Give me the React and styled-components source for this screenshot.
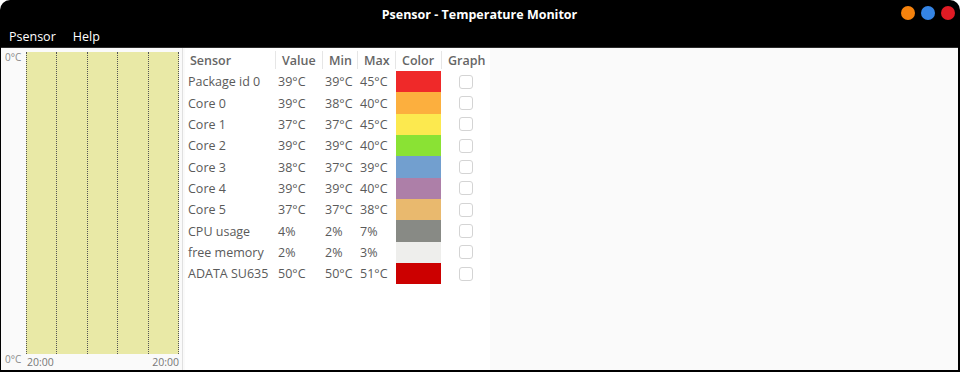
import React from 'react'
import styled, { createGlobalStyle } from 'styled-components'

const Global = createGlobalStyle`
  html, body { margin: 0; padding: 0; background: #fff; }
  body { font-family: "Open Sans", "DejaVu Sans", sans-serif; }
`

const Window = styled.div`
  width: 960px;
  height: 372px;
  box-sizing: border-box;
  background: #000;
  border-radius: 10px 10px 0 0;
  padding: 0 2px 2px 1px;
  display: flex;
  flex-direction: column;
  overflow: hidden;
`

const TitleBar = styled.div`
  height: 24px;
  position: relative;
  display: flex;
  align-items: center;
  justify-content: center;
  color: #fff;
  font-weight: 700;
  font-size: 12.5px;
  padding-top: 2px;
`

const Controls = styled.div`
  position: absolute;
  right: 3px;
  top: 6px;
  display: flex;
  gap: 6px;
`

const Dot = styled.span`
  width: 14px;
  height: 14px;
  border-radius: 50%;
  background: ${p => p.color};
`

const MenuBar = styled.div`
  height: 21px;
  display: flex;
  align-items: center;
  gap: 17px;
  padding-left: 8px;
  color: #fff;
  font-size: 12.5px;
`

const Body = styled.div`
  flex: 1;
  display: flex;
  background: #fafafa;
  border-top: 1px solid #2a2a2a;
`

const GraphPanel = styled.div`
  width: 181px;
  border-right: 1px solid #e0e0e0;
  display: flex;
  flex-direction: column;
  padding: 4px 0 0 0;
  font-size: 10px;
  color: #8a8a8a;
`

const GraphRow = styled.div`
  flex: 1;
  display: flex;
`

const Axis = styled.div`
  width: 25px;
  display: flex;
  flex-direction: column;
  justify-content: space-between;
  padding-left: 4px;
  box-sizing: border-box;
  line-height: 10px;
  margin-bottom: -10px;
`

const Plot = styled.div`
  width: 152px;
  display: flex;
  background: #e9e9a6;
  border-left: 1px dotted #555;
`

const PlotCol = styled.div`
  flex: 1;
  border-right: 1px dotted #555;
`

const TimeRow = styled.div`
  height: 16px;
  display: flex;
  justify-content: space-between;
  padding: 0 3px 0 26px;
  font-size: 10.5px;
  color: #777;
  line-height: 16px;
`

const Table = styled.div`
  margin-left: 2px;
  width: 305px;
  background: #fff;
  display: grid;
  grid-template-columns: 90px 47px 35px 38px 46px 49px;
  grid-template-rows: 23px;
  grid-auto-rows: 21.35px;
  align-content: start;
  font-size: 12.5px;
  color: #5a5a5a;
`

const Head = styled.div`
  display: flex;
  align-items: center;
  padding-left: ${p => (p.first ? 5 : 6)}px;
  font-weight: 600;
  color: #666;
  border-left: ${p => (p.first ? 'none' : '1px solid #e6e6e6')};
  margin: 3px 0 2px;
  box-sizing: border-box;
`

const Cell = styled.div`
  display: flex;
  align-items: center;
  padding-left: 3px;
  white-space: nowrap;
`

const Swatch = styled.div`
  background: ${p => p.color};
  margin-left: 1px;
`

const CheckCell = styled.div`
  display: flex;
  align-items: center;
  justify-content: center;
`

const Check = styled.span`
  width: 12px;
  height: 12px;
  border: 1px solid #d4d4d4;
  border-radius: 3px;
  background: #fff;
`

const sensors = [
  ['Package id 0', '39°C', '39°C', '45°C', '#ef2929'],
  ['Core 0', '39°C', '38°C', '40°C', '#fcaf3e'],
  ['Core 1', '37°C', '37°C', '45°C', '#fce94f'],
  ['Core 2', '39°C', '39°C', '40°C', '#8ae234'],
  ['Core 3', '38°C', '37°C', '39°C', '#729fcf'],
  ['Core 4', '39°C', '39°C', '40°C', '#ad7fa8'],
  ['Core 5', '37°C', '37°C', '38°C', '#e9b96e'],
  ['CPU usage', '4%', '2%', '7%', '#888a85'],
  ['free memory', '2%', '2%', '3%', '#eeeeec'],
  ['ADATA SU635', '50°C', '50°C', '51°C', '#cc0000']
]

const headers = ['Sensor', 'Value', 'Min', 'Max', 'Color', 'Graph']

export default function App() {
  return (
    <>
      <Global />
      <Window>
        <TitleBar>
          Psensor - Temperature Monitor
          <Controls>
            <Dot color="#f5820d" />
            <Dot color="#3584e4" />
            <Dot color="#e01b24" />
          </Controls>
        </TitleBar>
        <MenuBar>
          <span>Psensor</span>
          <span>Help</span>
        </MenuBar>
        <Body>
          <GraphPanel>
            <GraphRow>
              <Axis>
                <span>0°C</span>
                <span>0°C</span>
              </Axis>
              <Plot>
                {[0, 1, 2, 3, 4].map(i => (
                  <PlotCol key={i} />
                ))}
              </Plot>
            </GraphRow>
            <TimeRow>
              <span>20:00</span>
              <span>20:00</span>
            </TimeRow>
          </GraphPanel>
          <Table>
            {headers.map((h, i) => (
              <Head key={h} first={i === 0}>
                {h}
              </Head>
            ))}
            {sensors.map(([name, val, min, max, color]) => (
              <React.Fragment key={name}>
                <Cell>{name}</Cell>
                <Cell>{val}</Cell>
                <Cell>{min}</Cell>
                <Cell>{max}</Cell>
                <Swatch color={color} />
                <CheckCell>
                  <Check />
                </CheckCell>
              </React.Fragment>
            ))}
          </Table>
        </Body>
      </Window>
    </>
  )
}
